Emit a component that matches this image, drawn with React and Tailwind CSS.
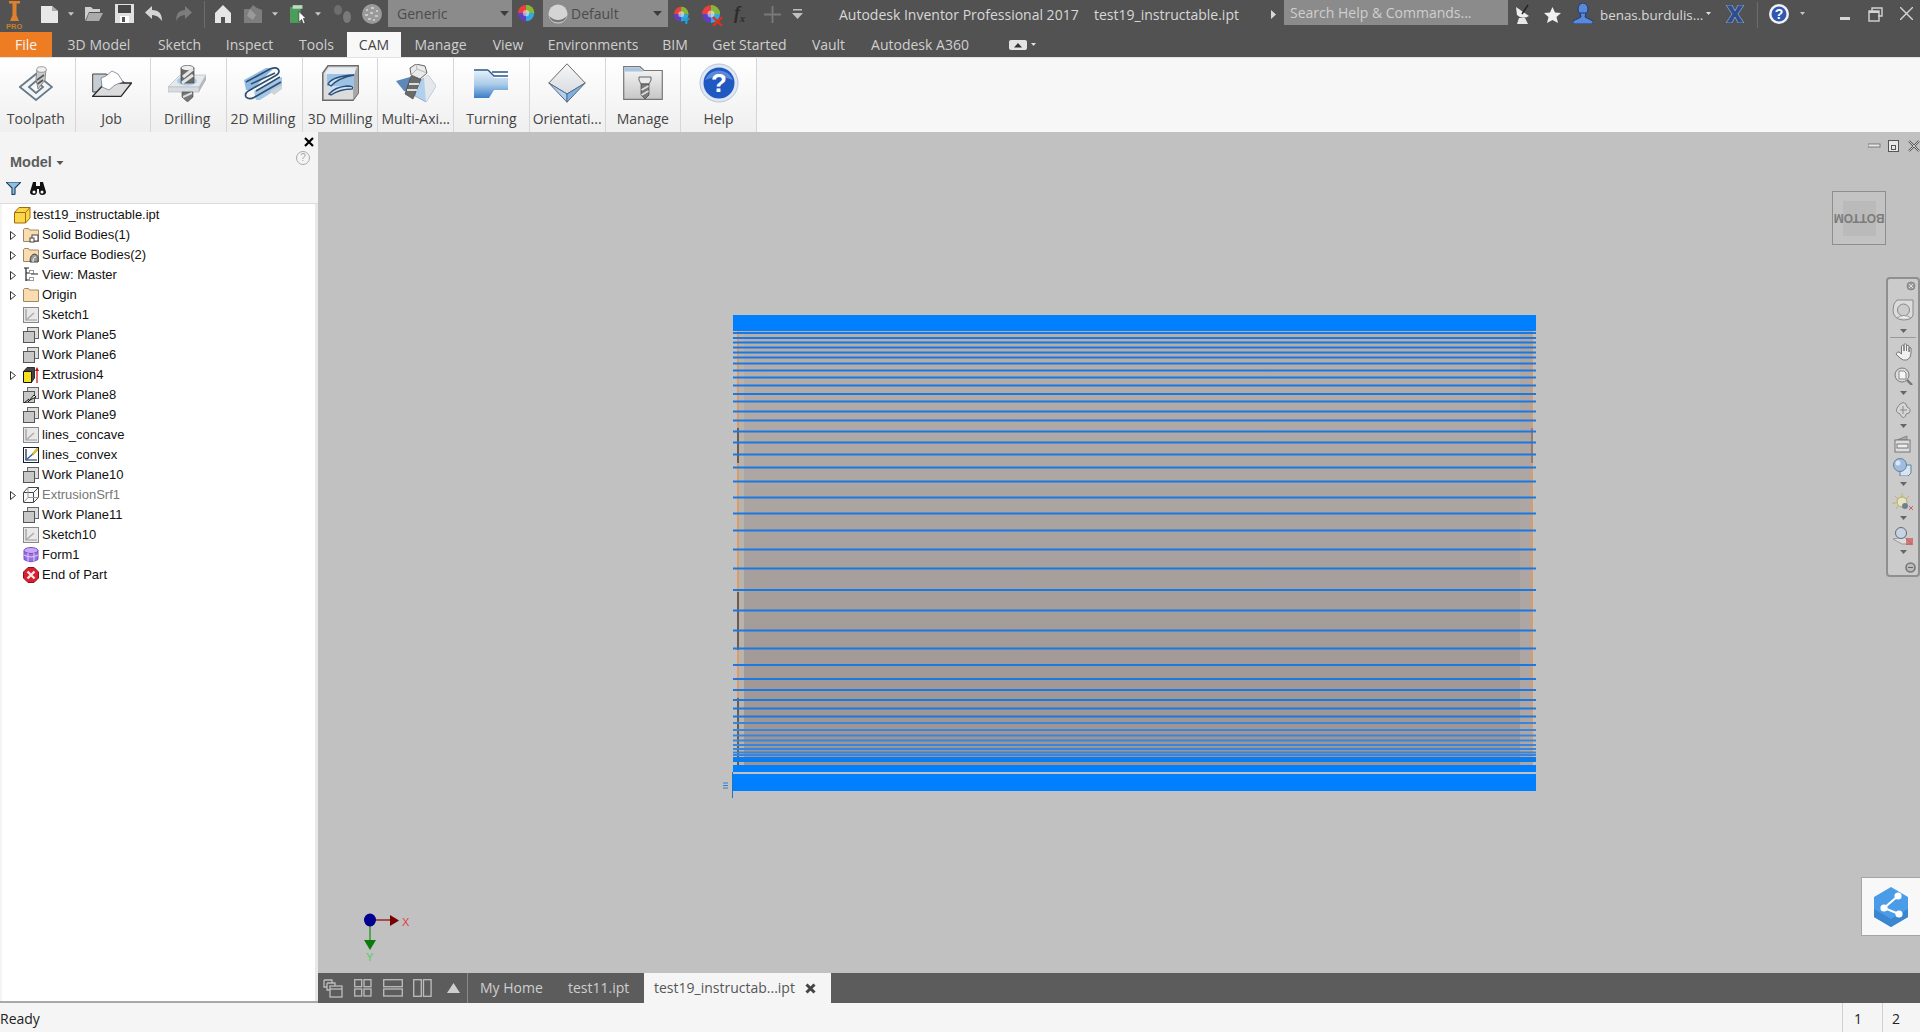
import React from "react";

const Caret = ({ c = "#c8c8c8", w = 7, h = 4 }) => (
  <svg width={w} height={h} viewBox="0 0 7 4"><path d="M0 0H7L3.5 4Z" fill={c} /></svg>
);

const Ball = ({ badge }) => (
  <svg width="22" height="22" viewBox="0 0 22 22">
    <path d="M10 1A9 9 0 0 1 19 10H10Z" fill="#e8c020" />
    <path d="M10 1A9 9 0 0 0 1 10H10Z" fill="#e84040" />
    <path d="M1 10A9 9 0 0 0 10 19V10Z" fill="#6040c0" />
    <path d="M19 10A9 9 0 0 1 10 19V10Z" fill="#30a8e0" />
    <path d="M10 1A9 9 0 0 1 19 10H10Z" fill="#50b040" opacity=".65" />
    <circle cx="10" cy="10" r="3.5" fill="#fff" opacity=".5" />
    {badge === "filter" && <path d="M11 15H21L17.5 18.5V22H15V18.5Z" fill="#20a0d8" />}
    {badge === "x" && <path d="M12 13L21 22M21 13L12 22" stroke="#e03020" strokeWidth="2.4" />}
  </svg>
);

const ToolpathIcon = () => (
  <svg width="34" height="35" viewBox="0 0 34 35">
    <path d="M0.8 21L17 8L33 21L17 34Z" fill="#f4f4f4" stroke="#66798a" strokeWidth="1.8" />
    <path d="M10 21L17 15L24 21L17 27Z" fill="#fafafa" stroke="#66798a" strokeWidth="1.8" />
    <path d="M18 3H27L26 14L19 23L17 13Z" fill="#c9c9c9" stroke="#777" strokeWidth=".8" />
    <ellipse cx="22.5" cy="3.5" rx="4.8" ry="2.8" fill="#f0f0f0" stroke="#888" strokeWidth=".8" />
    <path d="M18 14L25 9M18.5 18L24 14" stroke="#555" strokeWidth="1.6" />
  </svg>
);
const JobIcon = () => (
  <svg width="40" height="27" viewBox="0 0 40 27">
    <path d="M.7 4H14L32 12V22H.7Z" fill="#c6cdd3" stroke="#444" />
    <path d="M.7 26.3L13 13H39.5L29 26.3Z" fill="#dcdcdc" stroke="#2c2c2c" strokeWidth="1.3" />
    <path d="M9 8L14 6L20 1L26 4L31 12L23 15L17 20L10 17Z" fill="#fff" stroke="#5f6f80" strokeWidth=".7" />
  </svg>
);
const DrillIcon = () => (
  <svg width="38" height="37" viewBox="0 0 38 37">
    <path d="M0 22L12 10H38L31 22Z" fill="#e6e9ec" stroke="#b8bcc0" strokeWidth=".7" />
    <path d="M0 22H31V27H0Z" fill="#d8dce0" stroke="#b8bcc0" strokeWidth=".7" />
    <path d="M31 22L38 10V15L31 27Z" fill="#b4b8bc" />
    <ellipse cx="19" cy="16" rx="10" ry="4.5" fill="#a9cbe8" />
    <path d="M13 3H26V18H13Z" fill="#6a6a6a" stroke="#444" strokeWidth=".7" />
    <ellipse cx="19.5" cy="3" rx="6.5" ry="2.6" fill="#efefef" stroke="#555" strokeWidth=".7" />
    <path d="M15 12L25 4M14 18L25 10" stroke="#e4e4e4" strokeWidth="3" />
    <path d="M14 27H25V32L19.5 37L14 32Z" fill="#777" stroke="#444" strokeWidth=".6" />
    <path d="M15 32L24 28" stroke="#ddd" strokeWidth="2" />
  </svg>
);
const Mill2D = () => (
  <svg width="38" height="33" viewBox="0 0 38 33">
    <path d="M0 13L22 1L30 1L8 23L2 23Z" fill="#90b9e2" />
    <path d="M10 24L38 10V19L16 33H12Z" fill="#a6c6e6" />
    <path d="M26 24L38 18V22L30 28Z" fill="#cdd3d8" />
    <path d="M2 15L27 1.5Q34 -.5 35 4Q35 7 31 9L6 23Q0 26 2 30Q5 33 10 30.5L37 15" fill="none" stroke="#2f4f72" strokeWidth="1.7" />
    <path d="M7 17L31 6M12 24L36 10" fill="none" stroke="#2f4f72" strokeWidth="1.5" />
  </svg>
);
const Mill3D = () => (
  <svg width="37" height="36" viewBox="0 0 37 36">
    <path d="M6 .8H36.2V28L31 35.2H.8V8Z" fill="#dcdcdc" stroke="#6b6b6b" strokeWidth="1.5" />
    <path d="M36 1V28L31 35V10Z" fill="#a8a8a8" />
    <path d="M7 3H33V8L31 10H4V7Z" fill="#e8edf2" />
    <path d="M5 9H32V21H5Z" fill="#9cc2e6" />
    <path d="M5 21H32V24H5Z" fill="#c9dff2" />
    <path d="M6 19Q11 11 32 10Q16 13 9 21ZM7 29Q13 22 25 21Q33 21 30 24Q18 24 9 30Z" fill="#cfe1f2" stroke="#2c4f78" strokeWidth="1.3" />
  </svg>
);
const MultiAxis = () => (
  <svg width="40" height="38" viewBox="0 0 40 38">
    <path d="M0 17L14 13L14 28L8 27Z" fill="#5d88b8" />
    <path d="M20 20L32 11L40 22L30 38L19 32Z" fill="#b0d0ee" stroke="#7b8a9a" strokeWidth=".6" />
    <path d="M28 13L32 11L40 22L30 38Z" fill="#e4e8ec" />
    <path d="M15 12L25 15L17 35L9 30Z" fill="#6a6a6a" stroke="#3c3c3c" strokeWidth=".6" />
    <path d="M13 20L23 20M11 26L21 26" stroke="#ddd" strokeWidth="2.2" />
    <path d="M14 4L20 0L29 2L31 9L24 15L15 11Z" fill="#eaeaea" stroke="#555" strokeWidth=".9" />
    <path d="M20 0L21 5L31 9M21 5L15 11" stroke="#999" strokeWidth=".6" fill="none" />
  </svg>
);
const Turning = () => (
  <svg width="34" height="29" viewBox="0 0 34 29">
    <defs>
      <linearGradient id="turnG" x1="0" y1="0" x2="0" y2="1">
        <stop offset="0" stopColor="#e4eff9" />
        <stop offset=".5" stopColor="#a9cbe9" />
        <stop offset="1" stopColor="#3b7cc6" />
      </linearGradient>
    </defs>
    <path d="M0 2H14L20 9H34V21H20L15 29H0Z" fill="url(#turnG)" />
    <path d="M0 1H14M14 1L20 7H34M18 3H34" fill="none" stroke="#2b5688" strokeWidth="1.4" />
  </svg>
);
const Orient = () => (
  <svg width="38" height="40" viewBox="0 0 38 40">
    <defs>
      <linearGradient id="oriG" x1="0" y1="0" x2="0" y2="1">
        <stop offset="0" stopColor="#f6f6f6" />
        <stop offset="1" stopColor="#d8dce2" />
      </linearGradient>
    </defs>
    <path d="M19 .8L37.2 20L19 31L.8 20Z" fill="url(#oriG)" stroke="#6b6b6b" />
    <path d="M.8 20L19 31V39.2Z" fill="#b0d1ef" stroke="#5a6b7c" />
    <path d="M37.2 20L19 31V39.2Z" fill="#7fb2e4" stroke="#5a6b7c" />
  </svg>
);
const Manage = () => (
  <svg width="40" height="34" viewBox="0 0 40 34">
    <defs>
      <linearGradient id="manG" x1="0" y1="0" x2="0" y2="1">
        <stop offset="0" stopColor="#f7f7f7" />
        <stop offset="1" stopColor="#c6c6c6" />
      </linearGradient>
    </defs>
    <path d="M.7 .7H17L21 4.5H39.3V33.3H.7Z" fill="url(#manG)" stroke="#777" strokeWidth="1.2" />
    <path d="M1.5 1.5H16.5L20.5 5.5H1.5Z" fill="#a9c6e0" />
    <path d="M16 11H28V14L26 18H18L16 14Z" fill="#eaeaea" stroke="#555" strokeWidth=".9" />
    <path d="M18 18H26V29L22 33L18 29Z" fill="#7a7a7a" stroke="#444" strokeWidth=".7" />
    <path d="M18.5 24L25.5 20M18.5 29L25.5 25" stroke="#ddd" strokeWidth="1.8" />
  </svg>
);
const HelpIcon = () => (
  <svg width="40" height="40" viewBox="0 0 40 40">
    <circle cx="20" cy="20" r="19" fill="#dfe7f5" stroke="#b8c4d8" />
    <circle cx="20" cy="20" r="15.5" fill="#1f58c0" />
    <path d="M6 17A15 15 0 0 1 34 17Q20 11 6 17Z" fill="#5c88d8" />
    <text x="20" y="29" textAnchor="middle" fontFamily="Liberation Sans, sans-serif" fontWeight="700" fontSize="26" fill="#fff">?</text>
  </svg>
);

const RIBBON = [
  ["Toolpath", <ToolpathIcon />],
  ["Job", <JobIcon />],
  ["Drilling", <DrillIcon />],
  ["2D Milling", <Mill2D />],
  ["3D Milling", <Mill3D />],
  ["Multi-Axi...", <MultiAxis />],
  ["Turning", <Turning />],
  ["Orientati...", <Orient />],
  ["Manage", <Manage />],
  ["Help", <HelpIcon />],
];

const MENU = [
  ["3D Model", "w-[94px]"],
  ["Sketch", "w-[67px]"],
  ["Inspect", "w-[73px]"],
  ["Tools", "w-[61px]"],
];
const MENU2 = [
  ["Manage", "w-[79px]"],
  ["View", "w-[56px]"],
  ["Environments", "w-[114px]"],
  ["BIM", "w-[50px]"],
  ["Get Started", "w-[99px]"],
  ["Vault", "w-[59px]"],
  ["Autodesk A360", "w-[124px]"],
];

/* tree icons */
const Folder = ({ badge }) => (
  <svg width="16" height="16" viewBox="0 0 16 16">
    <path d="M.5 2.5L1.5 1.5H5.5L6.5 3H15.5V14.5H.5Z" fill="#fbdcae" stroke="#9a8a6a" />
    {badge === "solid" && <><rect x="9" y="8" width="6" height="6" fill="#fff" stroke="#444" /><rect x="7" y="11" width="4" height="4" fill="#fff" stroke="#444" /></>}
    {badge === "surf" && <><path d="M7 15Q7 7 12 7Q16 8 15 15Z" fill="#999" stroke="#444" /><path d="M10 15Q10 10 13 10" fill="none" stroke="#fff" /></>}
  </svg>
);
const PlaneIcon = ({ pin }) => (
  <svg width="16" height="16" viewBox="0 0 16 16">
    <rect x="4.5" y=".5" width="11" height="11" fill="#ddd" stroke="#666" />
    <rect x=".5" y="4.5" width="11" height="11" fill="#c8c8c8" stroke="#555" />
    {pin && <path d="M5 15L11 8L13 10L7 13ZM1 16L6 12" fill="#fff" stroke="#111" />}
  </svg>
);
const SketchIcon = ({ active }) => (
  <svg width="16" height="16" viewBox="0 0 16 16">
    <rect x=".5" y=".5" width="15" height="15" fill={active ? "#fdfdfd" : "#e8e8e8"} stroke={active ? "#123" : "#888"} />
    <path d="M3 2V13H14" fill="none" stroke={active ? "#123" : "#999"} strokeWidth="1.2" />
    <path d="M3 13L11 6" stroke={active ? "#1c5fc0" : "#aaa"} strokeWidth="1.4" />
    {active && <path d="M9 7L14 1L15 3L10 8Z" fill="#f0c820" stroke="#a80" strokeWidth=".5" />}
  </svg>
);
const ViewIcon = () => (
  <svg width="16" height="16" viewBox="0 0 16 16">
    <path d="M1 1H6M3 1V14M3 6H6M3 13H6M8 7H15M1 1" fill="none" stroke="#222" strokeWidth="1.2" />
    <rect x="6.5" y="3.5" width="4" height="3" fill="#fff" stroke="#333" strokeDasharray="1 1" />
    <rect x="6.5" y="10.5" width="4" height="3" fill="#fff" stroke="#333" strokeDasharray="1 1" />
  </svg>
);
const ExtrudeIcon = () => (
  <svg width="17" height="16" viewBox="0 0 17 16">
    <path d="M.5 4.5H8.5V15.5H.5Z" fill="#f5e020" stroke="#111" />
    <path d="M.5 4.5L4 .5H11.5V11L8.5 15.5V4.5Z" fill="#444" stroke="#111" strokeWidth=".8" />
    <path d="M14 16V3" stroke="#c01010" strokeWidth="1.2" />
    <path d="M12 4L14 0L16 4Z" fill="#c01010" />
  </svg>
);
const WireIcon = () => (
  <svg width="16" height="16" viewBox="0 0 16 16">
    <path d="M.5 5.5H10.5V15.5H.5ZM.5 5.5L5 .5H15.5V10.5L10.5 15.5M10.5 5.5L15.5 .5" fill="#fafafa" stroke="#444" />
    <path d="M5 .5V10.5H15.5M5 10.5L.5 15.5" fill="none" stroke="#999" />
  </svg>
);
const FormIcon = () => (
  <svg width="16" height="16" viewBox="0 0 16 16">
    <path d="M1 3.5V12.5Q8 17 15 12.5V3.5Z" fill="#9a70e0" stroke="#7850c0" />
    <ellipse cx="8" cy="3.5" rx="7" ry="3" fill="#c8a8f8" stroke="#7850c0" />
    <path d="M1 8Q8 12 15 8M5 6V15M11 6V15" fill="none" stroke="#e0d0ff" />
  </svg>
);
const EndIcon = () => (
  <svg width="16" height="16" viewBox="0 0 16 16">
    <path d="M5 .5H11L15.5 5V11L11 15.5H5L.5 11V5Z" fill="#d82030" stroke="#901020" />
    <path d="M4.5 4.5L11.5 11.5M11.5 4.5L4.5 11.5" stroke="#fbe8e8" strokeWidth="2.4" />
  </svg>
);
const PartIcon = () => (
  <svg width="17" height="17" viewBox="0 0 17 17">
    <path d="M.5 5.5L5 .5H16V11L11.5 16H.5Z" fill="#f8d848" stroke="#a86808" />
    <path d="M.5 5.5H11.5V16" fill="none" stroke="#a86808" />
    <path d="M11.5 5.5L16 .5" stroke="#a86808" />
  </svg>
);

const TREE = [
  ["Solid Bodies(1)", <Folder badge="solid" />, true],
  ["Surface Bodies(2)", <Folder badge="surf" />, true],
  ["View: Master", <ViewIcon />, true],
  ["Origin", <Folder />, true],
  ["Sketch1", <SketchIcon />, false],
  ["Work Plane5", <PlaneIcon />, false],
  ["Work Plane6", <PlaneIcon />, false],
  ["Extrusion4", <ExtrudeIcon />, true],
  ["Work Plane8", <PlaneIcon pin />, false],
  ["Work Plane9", <PlaneIcon />, false],
  ["lines_concave", <SketchIcon />, false],
  ["lines_convex", <SketchIcon active />, false],
  ["Work Plane10", <PlaneIcon />, false],
  ["ExtrusionSrf1", <WireIcon />, true, true],
  ["Work Plane11", <PlaneIcon />, false],
  ["Sketch10", <SketchIcon />, false],
  ["Form1", <FormIcon />, false],
  ["End of Part", <EndIcon />, false],
];

const LINES = [333, 338, 342.5, 347.5, 352.5, 357.5, 363.5, 370.5, 377.5, 385.5, 394, 401.5, 411.5, 420.5, 431.5, 442.5, 454.5, 467.5, 481.5, 497.5, 513.5, 530.5, 549.5, 568.5, 590, 610.5, 630.5, 648.5, 665, 679, 690, 700, 708.5, 716.5, 723, 730, 735.5, 740.5, 745, 749, 752.5, 755];

const Viewport = () => (
  <svg className="absolute inset-0" width="1602" height="841" viewBox="318 132 1602 841">
    <defs>
      <linearGradient id="brown" x1="0" y1="0" x2="0" y2="1">
        <stop offset="0" stopColor="#b5aeab" />
        <stop offset="1" stopColor="#9d9492" />
      </linearGradient>
    </defs>
    <rect x="739" y="331" width="792" height="440" fill="url(#brown)" />
    <rect x="739" y="331" width="5" height="440" fill="#b9b3ae" />
    <rect x="1520" y="331" width="11" height="440" fill="#aea6a3" />
    <rect x="737" y="331" width="2" height="440" fill="#dc9c68" />
    <rect x="1531" y="331" width="2" height="440" fill="#dc9c68" />
    <path d="M738 428V463M738 592V650M738 698V772" stroke="#404040" strokeWidth="1.4" />
    <path d="M1532 428V463" stroke="#5a5a60" strokeWidth="1" />
    {LINES.map((y) => (
      <rect key={y} x="733" y={y - 1} width="803" height="2" fill={y >= 723 ? "#3a85dc" : "#1a78e2"} />
    ))}
    <rect x="733" y="315" width="803" height="16" fill="#0080ff" />
    <rect x="733" y="757" width="803" height="5" fill="#0a7cf2" />
    <rect x="733" y="765" width="803" height="7" fill="#0080ff" />
    <rect x="732" y="774" width="804" height="17" fill="#0080ff" />
    <path d="M732.5 772V798" stroke="#2a70c0" />
    <path d="M723 783H728M723 785.5H728M723 788H728" stroke="#3080d0" />
    {/* triad */}
    <path d="M370 920H392" stroke="#8a0000" strokeWidth="1.2" />
    <path d="M390 915L399 920.5L390 926Z" fill="#7a0000" />
    <path d="M370 920V942" stroke="#109010" strokeWidth="1.2" />
    <path d="M364 940H376L370 950Z" fill="#0a7a0a" />
    <ellipse cx="370" cy="920" rx="6" ry="6.5" fill="#000090" />
    <text x="402" y="926" fontFamily="Liberation Sans, sans-serif" fontSize="11" fill="#e04040">X</text>
    <text x="366" y="961" fontFamily="Liberation Sans, sans-serif" fontSize="11" fill="#50d060">Y</text>
  </svg>
);

const NavIcon = ({ children, w = 22, h = 18 }) => (
  <svg width={w} height={h} viewBox={`0 0 ${w} ${h}`}>{children}</svg>
);

const NavBar = () => (
  <div className="absolute left-[1568px] top-[145px] w-[34px] h-[300px] rounded-[4px] border-2 border-[#8f8f8f] bg-[#cbcbcb] flex flex-col items-center">
    <div className="self-end mr-[2px] mt-[2px] h-[10px]">
      <svg width="10" height="10" viewBox="0 0 10 10"><circle cx="5" cy="5" r="4" fill="#9a9a9a" stroke="#888" /><path d="M3 3L7 7M7 3L3 7" stroke="#ddd" /></svg>
    </div>
    <div className="mt-[8px] h-[22px]">
      <svg width="23" height="22" viewBox="0 0 23 22">
        <path d="M5 1H21V16Q20 21 11 21Q1 20 1 11Q1 4 5 1Z" fill="#dcdcdc" stroke="#8a8a8a" />
        <circle cx="11.5" cy="11" r="6" fill="#ccc" stroke="#888" />
        <path d="M5 19Q12 14 19 19" fill="#eee" stroke="#999" />
      </svg>
    </div>
    <div className="mt-[8px] h-[6px] flex"><Caret c="#666" /></div>
    <div className="mt-[2px] h-px w-[26px] bg-[#999]" />
    <div className="mt-[5px] h-[18px]">
      <NavIcon>
        <path d="M4 11L8 15Q11 18 15 17Q19 15 19 10V5Q18 3.5 17 5V9V3Q16 1.5 14.5 3V8V1.5Q13 0 12 1.5V8V2.5Q10.5 1.5 9.5 3V11L7 9Q5 8.5 4 11Z" fill="#f0f0f0" stroke="#777" />
      </NavIcon>
    </div>
    <div className="mt-[6px] h-[18px]">
      <NavIcon>
        <circle cx="10" cy="8" r="7" fill="#ddd" stroke="#777" />
        <path d="M7 4H12L14 6V12H7Z" fill="#f5f5f5" stroke="#888" />
        <path d="M15 13L20 18" stroke="#777" strokeWidth="2.4" />
      </NavIcon>
    </div>
    <div className="mt-[6px] h-[5px] flex"><Caret c="#666" /></div>
    <div className="mt-[5px] h-[18px]">
      <NavIcon>
        <path d="M8 3Q11 0 14 3L15 6Q20 8 17 12L14 13Q13 18 10 16L8 13Q3 11 5 7Z" fill="#d6d6d6" stroke="#888" />
        <path d="M11 5V13M8 9H15" stroke="#888" />
      </NavIcon>
    </div>
    <div className="mt-[5px] h-[5px] flex"><Caret c="#666" /></div>
    <div className="mt-[6px] h-[18px]">
      <NavIcon>
        <path d="M5 5L15 1V5Z" fill="#aaa" stroke="#888" />
        <rect x="3" y="5" width="15" height="12" fill="#ddd" stroke="#777" />
        <rect x="5" y="9" width="11" height="4" fill="#eee" stroke="#777" />
      </NavIcon>
    </div>
    <div className="mt-[5px] h-[18px]">
      <NavIcon>
        <path d="M6 7H19V15L16 18H8V12Z" fill="#d8e4f0" stroke="#6080a0" />
        <circle cx="8" cy="7" r="6.5" fill="#a0bcdf" stroke="#6080a0" />
        <circle cx="6" cy="5" r="2.5" fill="#dbe7f6" />
      </NavIcon>
    </div>
    <div className="mt-[6px] h-[5px] flex"><Caret c="#666" /></div>
    <div className="mt-[6px] h-[18px]">
      <NavIcon>
        <path d="M10 0V4M3 3L6 6M0 10H4M17 3L14 6M4 16L6 13" stroke="#c8b060" strokeWidth="1" />
        <circle cx="10" cy="9" r="5" fill="#e8e4c0" stroke="#b0a870" />
        <circle cx="13" cy="13" r="3" fill="#708090" />
        <path d="M17 13L21 17M21 13L17 17" stroke="#d06060" />
      </NavIcon>
    </div>
    <div className="mt-[5px] h-[5px] flex"><Caret c="#666" /></div>
    <div className="mt-[6px] h-[18px]">
      <NavIcon>
        <path d="M1 12L10 17H20L12 10Z" fill="#ddd" stroke="#999" />
        <circle cx="9" cy="6" r="5.5" fill="#c6d4e2" stroke="#667" />
        <rect x="14" y="11" width="7" height="7" fill="#d04040" opacity=".6" />
      </NavIcon>
    </div>
    <div className="mt-[5px] h-[5px] flex"><Caret c="#666" /></div>
    <div className="self-end mr-[2px] mt-[7px] h-[10px]">
      <svg width="11" height="11" viewBox="0 0 11 11"><circle cx="5.5" cy="5.5" r="4.5" fill="#bbb" stroke="#777" strokeWidth="1.6" /><path d="M3 5.5H8" stroke="#666" /></svg>
    </div>
  </div>
);

const ViewCube = () => (
  <div className="absolute left-[1514px] top-[59px] w-[54px] h-[54px] border border-[#8e8e8e] bg-[#c3c3c3] flex items-center justify-center">
    <div className="w-[33px] h-[35px] bg-[#bababa] flex items-center justify-center">
      <span className="rotate-180 text-[12px] font-bold text-[#7c7c7c] font-['Liberation_Sans',sans-serif] tracking-[-0.2px]">BOTTOM</span>
    </div>
  </div>
);

const ShareBox = () => (
  <div className="absolute right-0 top-[745px] w-[59px] h-[59px] bg-[#f8f8f8] border-t border-b border-l border-[#a5a5a5] flex items-center justify-center">
    <svg width="36" height="40" viewBox="0 0 36 40">
      <path d="M18 0L35 10V30L18 40L1 30V10Z" fill="#4a9ce8" />
      <path d="M18 40L35 30V22L18 32L1 22V30Z" fill="#3a86d0" />
      <path d="M25 9L11 21L26 27" fill="none" stroke="#fff" strokeWidth="2" />
      <circle cx="25" cy="9" r="3.6" fill="#fff" />
      <circle cx="11" cy="21" r="3.6" fill="#fff" />
      <circle cx="26" cy="27" r="3.6" fill="#fff" />
    </svg>
  </div>
);

export default function App() {
  const ui = "font-['Open_Sans',sans-serif]";
  return (
    <div className="w-[1920px] h-[1032px] overflow-hidden flex flex-col bg-[#f5f5f5] font-['Liberation_Sans',sans-serif]">
      {/* title bar */}
      <div className="h-[32px] bg-[#525252] flex items-start shrink-0">
        <div className="ml-[5px] w-[18px] h-[30px] flex">
          <svg width="18" height="30" viewBox="0 0 18 30">
            <path d="M4 1H15V3.5H11.5V15L14 21H5L7.5 15V3.5H4Z" fill="#e0802c" />
            <text x="1" y="29" fontFamily="Liberation Sans, sans-serif" fontSize="7.5" fontWeight="700" fill="#c8802c">PRO</text>
          </svg>
        </div>
        <div className="ml-[18px] mt-[5px] w-[17px] flex">
          <svg width="17" height="18" viewBox="0 0 17 18"><path d="M0 1H11L17 6V18H0Z" fill="#e8e8e8" /><path d="M11 1V6H17Z" fill="#aaa" /></svg>
        </div>
        <div className="ml-[10px] mt-[12px] w-[6px] flex"><Caret w={6} /></div>
        <div className="ml-[11px] mt-[7px] w-[18px] flex">
          <svg width="18" height="14" viewBox="0 0 18 14"><path d="M0 0H6L8 2H15V5H4L0 14Z" fill="#cfcfcf" /><path d="M4 6H18L14 14H1Z" fill="#aaa" /></svg>
        </div>
        <div className="ml-[12px] mt-[4px] w-[19px] flex">
          <svg width="19" height="19" viewBox="0 0 19 19"><rect width="19" height="19" fill="#e0e0e0" /><rect x="3" y="1" width="13" height="8" fill="#474747" /><rect x="5" y="12" width="9" height="7" fill="#fff" /><rect x="7" y="13" width="3" height="5" fill="#555" /></svg>
        </div>
        <div className="ml-[11px] mt-[6px] w-[17px] flex">
          <svg width="17" height="15" viewBox="0 0 17 15"><path d="M7 0V4Q17 4 17 15Q13 9 7 9V13L0 6.5Z" fill="#d5d5d5" /></svg>
        </div>
        <div className="ml-[14px] mt-[6px] w-[16px] flex">
          <svg width="16" height="15" viewBox="0 0 16 15"><path d="M9 0V4Q0 4 0 15Q3 9 9 9V13L16 6.5Z" fill="#7c7c7c" /></svg>
        </div>
        <div className="ml-[12px] mt-[1px] w-px h-[27px] bg-[#6c6c6c]" />
        <div className="ml-[10px] mt-[5px] w-[16px] flex">
          <svg width="16" height="18" viewBox="0 0 16 18"><path d="M8 0L16 8V18H10V12H6V18H0V8Z" fill="#e6e6e6" /></svg>
        </div>
        <div className="ml-[13px] mt-[5px] w-[18px] flex">
          <svg width="18" height="18" viewBox="0 0 18 18"><path d="M0 4H6L9 0L13 3L18 5V18H0Z" fill="#7e7e7e" /><path d="M6 4L12 10L9 15L3 11Z" fill="#9a9a9a" /></svg>
        </div>
        <div className="ml-[10px] mt-[12px] w-[6px] flex"><Caret w={6} /></div>
        <div className="ml-[12px] mt-[4px] w-[16px] flex relative">
          <svg width="18" height="21" viewBox="0 0 18 21">
            <rect x="0" y="2" width="12" height="18" fill="#4c9c5c" />
            <rect x="3" y="0" width="11" height="4" fill="#bcdcc0" />
            <path d="M10 7V19L13 16L15 21L17 20L15 15L18 15Z" fill="#fff" stroke="#222" strokeWidth=".6" />
          </svg>
        </div>
        <div className="ml-[9px] mt-[12px] w-[6px] flex"><Caret w={6} /></div>
        <div className="ml-[12px] mt-[4px] w-[18px] flex">
          <svg width="18" height="20" viewBox="0 0 18 20"><ellipse cx="5" cy="6" rx="4" ry="5" fill="#6e6e6e" /><ellipse cx="14" cy="13" rx="4" ry="6" fill="#7a7a7a" /></svg>
        </div>
        <div className="ml-[11px] mt-[4px] w-[20px] flex">
          <svg width="20" height="20" viewBox="0 0 20 20">
            <circle cx="10" cy="10" r="10" fill="#9a9a9a" />
            <path d="M4 6h2M9 4h3M14 7h2M3 11h3M8 9h3M13 12h3M6 15h3M11 16h2" stroke="#d8d8d8" strokeWidth="1.6" />
          </svg>
        </div>
        <div className={`ml-[6px] w-[124px] h-[27px] bg-[#8b8b8b] flex items-center justify-between pl-[9px] pr-[3px] text-[14px] text-[#4c4c4c] ${ui}`}>
          <span>Generic</span>
          <Caret c="#3c3c3c" w={9} h={5} />
        </div>
        <div className="ml-[5px] mt-[3px] w-[20px] flex"><Ball /></div>
        <div className={`ml-[6px] w-[125px] h-[27px] bg-[#8b8b8b] flex items-center pl-[5px] pr-[6px] text-[14px] text-[#4c4c4c] ${ui}`}>
          <svg width="20" height="20" viewBox="0 0 20 20"><circle cx="10" cy="10" r="9.5" fill="#d4d4d4" /><path d="M1 12Q10 20 19 12A9.5 9.5 0 0 1 1 12Z" fill="#777" /></svg>
          <span className="ml-[3px]">Default</span>
          <span className="ml-auto flex"><Caret c="#3c3c3c" w={9} h={5} /></span>
        </div>
        <div className="ml-[5px] mt-[4px] w-[18px] flex"><Ball badge="filter" /></div>
        <div className="ml-[10px] mt-[4px] w-[23px] flex"><Ball badge="x" /></div>
        <span className="ml-[10px] mt-[1px] w-[17px] text-[18px] italic font-bold text-[#2c2c2c] font-['Liberation_Serif',serif] leading-[24px] whitespace-nowrap">f<sub className="text-[10px]">x</sub></span>
        <div className="ml-[13px] mt-[6px] w-[17px] flex">
          <svg width="17" height="17" viewBox="0 0 17 17"><path d="M8.5 0V17M0 8.5H17" stroke="#7a7a7a" strokeWidth="1.8" /></svg>
        </div>
        <div className="ml-[11px] mt-[9px] w-[11px] flex">
          <svg width="11" height="10" viewBox="0 0 11 10"><path d="M1 .75H10" stroke="#c0c0c0" strokeWidth="1.5" /><path d="M0 4H11L5.5 10Z" fill="#c0c0c0" /></svg>
        </div>
        <span className={`ml-[36px] w-[238px] h-[32px] leading-[30px] text-[14px] text-[#d8d8d8] whitespace-nowrap ${ui}`}>Autodesk Inventor Professional 2017</span>
        <span className={`ml-[17px] w-[144px] h-[32px] leading-[30px] text-[14px] text-[#d8d8d8] whitespace-nowrap ${ui}`}>test19_instructable.ipt</span>
        <div className="ml-[33px] mt-[10px] w-[5px] flex">
          <svg width="5" height="9" viewBox="0 0 5 9"><path d="M0 0L5 4.5L0 9Z" fill="#d8d8d8" /></svg>
        </div>
        <div className={`ml-[8px] w-[224px] h-[25px] bg-[#8b8b8b] pl-[6px] flex items-center text-[14px] text-[#cfcfcf] whitespace-nowrap ${ui}`}>Search Help &amp; Commands...</div>
        <div className="ml-[8px] mt-[4px] w-[14px] flex">
          <svg width="14" height="21" viewBox="0 0 14 21"><path d="M0 3L13 12Q6 16 1 11Z" fill="#eee" /><path d="M6 10L12 1" stroke="#222" strokeWidth="1.5" /><path d="M3 14H9L12 20H1Z" fill="#e8e8e8" /></svg>
        </div>
        <div className="ml-[14px] mt-[7px] w-[17px] flex">
          <svg width="17" height="16" viewBox="0 0 17 16"><path d="M8.5 0L11 5.5L17 6L12.5 10L14 16L8.5 13L3 16L4.5 10L0 6L6 5.5Z" fill="#f0f0f0" /></svg>
        </div>
        <div className="ml-[12px] mt-[3px] w-[20px] flex">
          <svg width="20" height="21" viewBox="0 0 20 21"><ellipse cx="10" cy="6" rx="5" ry="6" fill="#5c88d8" stroke="#173a80" /><path d="M7 10L8 14L0 18V21H20V18L12 14L13 10Z" fill="#5c88d8" stroke="#173a80" /></svg>
        </div>
        <span className={`ml-[7px] w-[104px] h-[30px] leading-[30px] text-[13.4px] text-[#d8d8d8] whitespace-nowrap ${ui}`}>benas.burdulis...</span>
        <div className="ml-[2px] mt-[12px] w-[5px] flex"><Caret w={5} h={3} c="#e0e0e0" /></div>
        <div className="ml-[15px] mt-[5px] w-[18px] flex">
          <svg width="18" height="18" viewBox="0 0 18 18"><path d="M0 0H6L9 6L12 0H18L12 9L18 18H12L9 12L6 18H0L6 9Z" fill="#2d4f90" stroke="#9fb4d8" strokeWidth=".7" /></svg>
        </div>
        <div className="ml-[13px] mt-[2px] w-px h-[26px] bg-[#6c6c6c]" />
        <div className="ml-[11px] mt-[4px] w-[20px] flex">
          <svg width="20" height="20" viewBox="0 0 20 20"><circle cx="10" cy="10" r="10" fill="#f2f2f6" /><circle cx="10" cy="10" r="7.5" fill="#3058b0" /><text x="10" y="15" textAnchor="middle" fontFamily="Liberation Sans, sans-serif" fontWeight="700" fontSize="14" fill="#fff">?</text></svg>
        </div>
        <div className="ml-[11px] mt-[12px] w-[5px] flex"><Caret w={5} h={3} /></div>
        <div className="ml-[35px] mt-[17px] w-[10px] h-[3px] bg-[#d4d4d4]" />
        <div className="ml-[18px] mt-[7px] w-[15px] flex">
          <svg width="15" height="15" viewBox="0 0 15 15" fill="none" stroke="#d4d4d4" strokeWidth="1.4"><path d="M4 4V1H14V9H10" /><rect x="1" y="4" width="10" height="10" /><path d="M1 5H11" strokeWidth="2" /></svg>
        </div>
        <div className="ml-[17px] mt-[7px] w-[13px] flex">
          <svg width="13" height="13" viewBox="0 0 13 13"><path d="M0 0L13 13M13 0L0 13" stroke="#d4d4d4" strokeWidth="1.4" /></svg>
        </div>
      </div>

      {/* ribbon tabs */}
      <div className={`h-[25px] bg-[#525252] flex items-stretch shrink-0 text-[14px] leading-[25px] text-center text-[#cfcfcf] ${ui}`}>
        <div className="w-[52px] bg-[#ee7c22] text-[#f4f4f4]">File</div>
        {MENU.map(([t, w]) => (
          <div key={t} className={`${w} whitespace-nowrap`}>{t}</div>
        ))}
        <div className="w-[54px] bg-[#f8f8f8] text-[#444]">CAM</div>
        {MENU2.map(([t, w]) => (
          <div key={t} className={`${w} whitespace-nowrap`}>{t}</div>
        ))}
        <div className="ml-[27px] flex items-center gap-[4px]">
          <svg width="18" height="10" viewBox="0 0 18 10"><rect width="18" height="10" rx="2" fill="#e4e4e4" /><path d="M5 7.5H13L9 3Z" fill="#333" /></svg>
          <Caret w={5} h={3} c="#e0e0e0" />
        </div>
      </div>

      {/* ribbon */}
      <div className={`h-[75px] bg-[#f7f7f7] flex shrink-0 border-t border-[#e4e4e4] ${ui}`}>
        {RIBBON.map(([t, icon], i) => (
          <div key={t} className={`w-[75.7px] h-full shrink-0 flex flex-col items-center border-r border-[#d6d6d6] bg-gradient-to-b from-[#ffffff] to-[#efefef] ${i < 4 ? "pr-[3px]" : ""}`}>
            <div className="h-[47px] w-full flex items-center justify-center pt-[3px]">{icon}</div>
            <div className="mt-[4px] text-[14px] leading-[20px] text-[#444] whitespace-nowrap">{t}</div>
          </div>
        ))}
      </div>

      {/* main */}
      <div className="flex-1 flex min-h-0">
        {/* browser */}
        <div className="w-[318px] shrink-0 flex flex-col border-b-2 border-[#a8a8a8] bg-[#f4f4f4]">
          <div className="h-[72px] flex flex-col shrink-0 relative border-b border-[#dcdcdc]">
            <div className="h-[50px] flex items-start justify-between pl-[10px] pr-[5px] relative">
              <div className="mt-[20px] flex items-center gap-[4px] text-[14.5px] font-bold text-[#5c5c5c]">
                Model
                <Caret c="#555" w={8} h={4} />
              </div>
              <div className="flex flex-col items-end">
                <svg className="mt-[5px] mr-[-1px]" width="10" height="10" viewBox="0 0 10 10"><path d="M1 1L9 9M9 1L1 9" stroke="#000" strokeWidth="2.2" /></svg>
                <div className="mt-[4px] mr-[3px] w-[14px] h-[14px] rounded-full border border-[#aaa] text-[10px] leading-[12px] text-center text-[#aaa]">?</div>
              </div>
            </div>
            <div className="flex items-center pl-[6px] gap-[9px]">
              <svg width="15" height="13" viewBox="0 0 15 13"><path d="M0 0H15L9 6V12L6 13V6Z" fill="#8ec0e0" stroke="#1a3a60" strokeWidth="1.1" /></svg>
              <svg width="16" height="13" viewBox="0 0 16 13"><path d="M3 0H6V4H10V0H13L16 10Q16 13 12 13Q9 13 9 9V7H7V9Q7 13 4 13Q0 13 0 10Z" fill="#111" /><circle cx="4" cy="10" r="1.5" fill="#fff" /><circle cx="12" cy="10" r="1.5" fill="#fff" /></svg>
            </div>
          </div>
          <div className="flex-1 flex min-h-0 pl-[2px]">
            <div className="flex-1 bg-white text-[13px] text-[#111] pt-[1px]">
              <div className="h-[20px] pl-[12px] flex items-center gap-[2px]">
                <PartIcon />
                <span className="whitespace-nowrap">test19_instructable.ipt</span>
              </div>
              {TREE.map(([t, icon, exp, dim]) => (
                <div key={t} className="h-[20px] pl-[8px] flex items-center">
                  <div className="w-[13px] flex">
                    {exp && (
                      <svg width="6" height="9" viewBox="0 0 6 9"><path d="M.5 .5L5.5 4.5L.5 8.5Z" fill="#fff" stroke="#333" /></svg>
                    )}
                  </div>
                  <div className="w-[19px] flex">{icon}</div>
                  <span className={dim ? "whitespace-nowrap text-[#777]" : "whitespace-nowrap"}>{t}</span>
                </div>
              ))}
            </div>
            <div className="w-[3px] bg-[#e8e8e8]" />
          </div>
        </div>

        {/* canvas + doc tabs */}
        <div className="flex-1 flex flex-col min-w-0">
          <div className="flex-1 relative bg-[#c1c1c1] overflow-hidden">
            <Viewport />
            <div className="absolute right-0 top-[8px] flex items-center">
              <svg width="13" height="6" viewBox="0 0 13 6"><rect y="1" width="12" height="3" fill="#e8e8e8" stroke="#666" strokeWidth=".8" /></svg>
              <svg className="ml-[7px]" width="11" height="12" viewBox="0 0 11 12" fill="#e8e8e8" stroke="#555"><rect x=".5" y=".5" width="10" height="11" /><rect x="3.5" y="5.5" width="4" height="4" /></svg>
              <svg className="ml-[9px]" width="12" height="12" viewBox="0 0 12 12"><path d="M1 1L11 11M11 1L1 11" stroke="#555" strokeWidth="2.2" /><path d="M1 1L11 11M11 1L1 11" stroke="#e8e8e8" strokeWidth=".8" /></svg>
            </div>
            <ViewCube />
            <NavBar />
            <ShareBox />
          </div>
          <div className={`h-[30px] bg-[#5c5c5c] flex items-stretch shrink-0 text-[14px] leading-[30px] ${ui}`}>
            <div className="w-[150px] flex items-center pl-[5px] border-r border-[#8a8a8a] shrink-0">
              <svg width="20" height="19" viewBox="0 0 20 19" fill="none" stroke="#bdbdbd" strokeWidth="1.3"><path d="M1 1H9V4M1 1V8H4" /><path d="M4 4H12V7M4 4V11H7" /><rect x="7" y="7" width="12" height="11" /><path d="M7 10H19" /></svg>
              <svg className="ml-[11px]" width="18" height="18" viewBox="0 0 18 18" fill="none" stroke="#bdbdbd" strokeWidth="1.3"><rect x=".7" y=".7" width="7" height="7" /><rect x="10" y=".7" width="7" height="7" /><rect x=".7" y="10" width="7" height="7" /><rect x="10" y="10" width="7" height="7" /></svg>
              <svg className="ml-[11px]" width="20" height="18" viewBox="0 0 20 18" fill="none" stroke="#bdbdbd" strokeWidth="1.3"><rect x=".7" y=".7" width="18.6" height="7" /><rect x=".7" y="10" width="18.6" height="7" /></svg>
              <svg className="ml-[10px]" width="19" height="18" viewBox="0 0 19 18" fill="none" stroke="#bdbdbd" strokeWidth="1.3"><rect x=".7" y=".7" width="7.6" height="16.6" /><rect x="10.5" y=".7" width="7.6" height="16.6" /></svg>
              <svg className="ml-[15px]" width="13" height="10" viewBox="0 0 13 10"><path d="M6.5 0L13 10H0Z" fill="#cfcfcf" /></svg>
            </div>
            <div className="w-[70px] pl-[12px] text-[#cfcfcf] whitespace-nowrap shrink-0">My Home</div>
            <div className="w-[106px] pl-[30px] text-[#cfcfcf] whitespace-nowrap shrink-0">test11.ipt</div>
            <div className="w-[187px] bg-[#f5f5f5] text-[#555] pl-[10px] flex items-center justify-between pr-[15px] shrink-0">
              <span className="whitespace-nowrap">test19_instructab...ipt</span>
              <svg width="11" height="11" viewBox="0 0 11 11"><path d="M1.5 1.5L9.5 9.5M9.5 1.5L1.5 9.5" stroke="#444" strokeWidth="3" /></svg>
            </div>
          </div>
        </div>
      </div>

      {/* status bar */}
      <div className={`h-[29px] bg-[#f5f5f5] flex items-stretch shrink-0 text-[14px] leading-[32px] text-[#222] ${ui}`}>
        <span>Ready</span>
        <div className="ml-auto w-[40px] border-l border-[#d0d0d0] pl-[11px]">1</div>
        <div className="w-[38px] border-l border-[#d0d0d0] pl-[9px]">2</div>
      </div>
    </div>
  );
}
